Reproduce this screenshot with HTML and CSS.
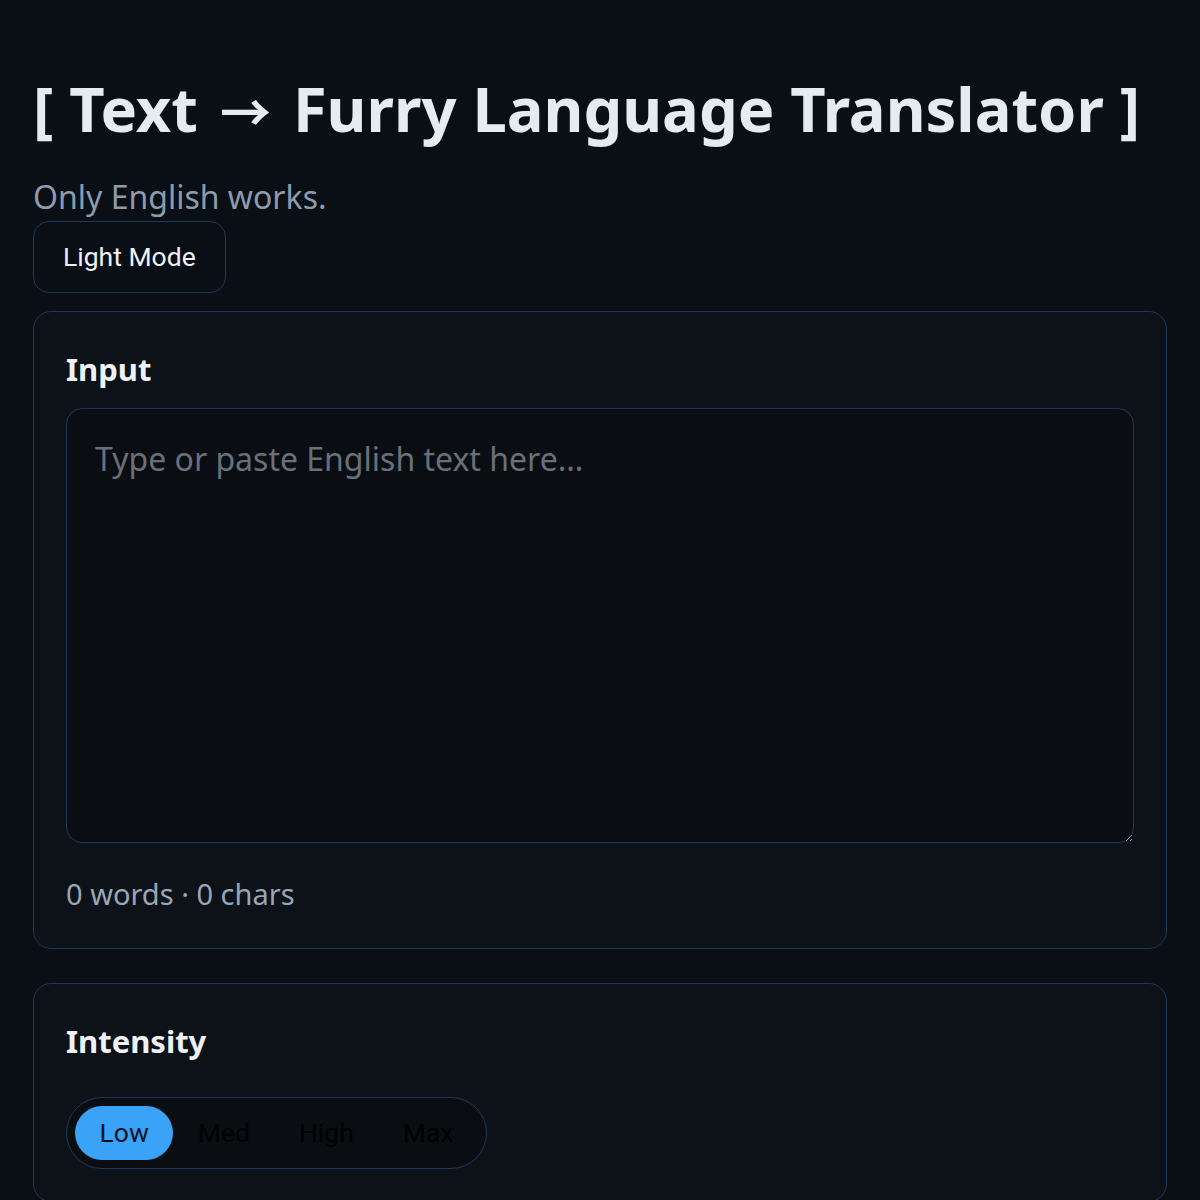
FILE: index.html
```html
<!DOCTYPE html>
<html lang="en">
<head>
<meta charset="utf-8">
<title>Text → Furry Language Translator</title>
<link rel="stylesheet" href="styles.css">
</head>
<body>
<main class="page">
  <header class="head">
    <h1 class="title">[ Text <span class="arrow">→</span> Furry Language Translator ]</h1>
    <p class="subtitle">Only English works.</p>
    <button class="mode-btn" type="button">Light Mode</button>
  </header>

  <section class="card">
    <h2 class="card-title">Input</h2>
    <textarea class="input" placeholder="Type or paste English text here..."></textarea>
    <div class="count">0 words · 0 chars</div>
  </section>

  <section class="card">
    <h2 class="card-title">Intensity</h2>
    <div class="seg">
      <button class="seg-btn active" type="button">Low</button>
      <button class="seg-btn" type="button">Med</button>
      <button class="seg-btn" type="button">High</button>
      <button class="seg-btn" type="button">Max</button>
    </div>
  </section>
</main>
</body>
</html>
```

FILE: styles.css
```css
* { box-sizing: border-box; }

html, body {
  margin: 0;
  background: #0a0e15;
}

body {
  font-family: "Noto Sans", "Open Sans", sans-serif;
  color: #e6ebf2;
}

.page {
  padding: 71px 33px 32px;
  display: flex;
  flex-direction: column;
  gap: 34px;
}

.head {
  display: flex;
  flex-direction: column;
  align-items: flex-start;
  margin-bottom: -16px;
}

.title {
  margin: 0;
  font-size: 61.4px;
  font-weight: 700;
  line-height: 74px;
  color: #e6ebf2;
  white-space: nowrap;
}

.arrow {
  font-family: "Noto Sans CJK SC", sans-serif;
  font-size: 51px;
  margin: 0 6px;
}

.subtitle {
  margin: 28px 0 0;
  font-size: 32px;
  line-height: 44px;
  color: #8d9bad;
}

.mode-btn {
  margin-top: 2px;
  font-family: Roboto, sans-serif;
  font-size: 26.5px;
  color: #eef2f7;
  background: #0a0e15;
  border: 1px solid #1c3a5a;
  border-radius: 16px;
  padding: 20px 29px;
  line-height: 30px;
}

.card {
  background: #0d1219;
  border: 1px solid #1c3a5a;
  border-radius: 18px;
  padding: 32px;
  display: flex;
  flex-direction: column;
  align-items: stretch;
}

.card-title {
  margin: 0 0 14px;
  font-size: 31px;
  font-weight: 700;
  line-height: 50px;
  color: #eef2f7;
}

.input {
  height: 435px;
  width: 100%;
  background: #0a0e13;
  border: 1px solid #1c3a5a;
  border-radius: 16px;
  padding: 26px 28px;
  font-family: "Noto Sans", "Open Sans", sans-serif;
  font-size: 32px;
  line-height: 48px;
  color: #e6ebf2;
  resize: vertical;
  outline: none;
}

.input::placeholder {
  color: #6a7079;
}

.count {
  margin-top: 29px;
  font-size: 29px;
  line-height: 44px;
  color: #98a6b7;
}

.seg {
  margin-top: 17px;
  align-self: flex-start;
  display: flex;
  padding: 8px;
  border: 1px solid #1c3a5a;
  border-radius: 999px;
  background: #0a0e13;
}

.seg-btn {
  font-family: Roboto, sans-serif;
  font-size: 26.5px;
  line-height: 30px;
  padding: 12px 24.5px;
  border: 0;
  border-radius: 999px;
  background: transparent;
  color: #000;
}

.seg-btn.active {
  background: #3aa3f7;
  color: #06121f;
}
```
